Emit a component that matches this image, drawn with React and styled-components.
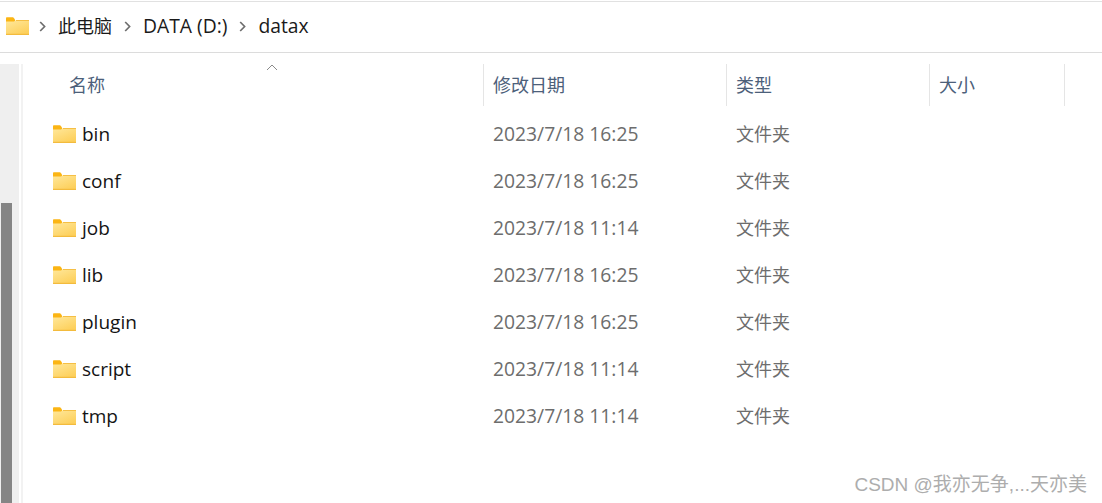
import React from "react";
import styled, { createGlobalStyle } from "styled-components";

const GlobalStyle = createGlobalStyle`
  html, body { margin: 0; padding: 0; background: #fff; }
  body { font-family: "Open Sans", "Noto Sans CJK SC", sans-serif; overflow: hidden; }
`;

const files = [
  { name: "bin", date: "2023/7/18 16:25" },
  { name: "conf", date: "2023/7/18 16:25" },
  { name: "job", date: "2023/7/18 11:14" },
  { name: "lib", date: "2023/7/18 16:25" },
  { name: "plugin", date: "2023/7/18 16:25" },
  { name: "script", date: "2023/7/18 11:14" },
  { name: "tmp", date: "2023/7/18 11:14" },
];

const columns = "461px 243px 203px 135px";

function FolderIcon({ id }) {
  return (
    <svg width="23" height="18" viewBox="0 0 23 18">
      <defs>
        <linearGradient id={id} x1="0" y1="0" x2="0.6" y2="1">
          <stop offset="0" stopColor="#ffe89c" />
          <stop offset="1" stopColor="#fdd05c" />
        </linearGradient>
      </defs>
      <path d="M0 1.2C0 .6.5.2 1 .2h5.4c.4 0 .7.1 1 .4L9 2.4v3H0z" fill="#fbb514" />
      <path d="M0 4.6h8L10 3h12.2c.5 0 .8.3.8.8v13.4c0 .5-.3.8-.8.8H.8c-.5 0-.8-.3-.8-.8z" fill={`url(#${id})`} />
      <rect x="0" y="16.8" width="23" height="1.2" fill="#f3bb3d" />
      <rect x="10" y="3" width="13" height="1" fill="#f5bf45" />
    </svg>
  );
}

function Chevron() {
  return (
    <ChevronBox>
      <svg width="7" height="11" viewBox="0 0 7 11">
        <path d="M1.2 1 5.6 5.5 1.2 10" fill="none" stroke="#6e6e6e" strokeWidth="1.7" />
      </svg>
    </ChevronBox>
  );
}

export default function App() {
  return (
    <Page>
      <GlobalStyle />
      <AddressBar>
        <FolderIcon id="addr" />
        <Chevron />
        <Crumb $cjk>此电脑</Crumb>
        <Chevron />
        <Crumb>DATA (D:)</Crumb>
        <Chevron />
        <Crumb>datax</Crumb>
      </AddressBar>
      <Body>
        <ScrollTrack>
          <ScrollThumb />
        </ScrollTrack>
        <Listing>
          <HeaderRow>
            <HeaderCell $first>
              名称
              <SortCaret width="12" height="7" viewBox="0 0 12 7">
                <path d="M1 6 6 1l5 5" fill="none" stroke="#8a8a8a" strokeWidth="1" />
              </SortCaret>
            </HeaderCell>
            <HeaderCell>修改日期</HeaderCell>
            <HeaderCell>类型</HeaderCell>
            <HeaderCell>大小</HeaderCell>
          </HeaderRow>
          {files.map((file) => (
            <FileRow key={file.name}>
              <NameCell>
                <FolderIcon id={`f-${file.name}`} />
                <FileName>{file.name}</FileName>
              </NameCell>
              <DateCell>{file.date}</DateCell>
              <TypeCell>文件夹</TypeCell>
              <span />
            </FileRow>
          ))}
        </Listing>
      </Body>
      <Watermark>CSDN @我亦无争,...天亦美</Watermark>
    </Page>
  );
}

const Page = styled.div`
  position: relative;
  width: 1102px;
  height: 503px;
  overflow: hidden;
  background: #fff;
`;

const AddressBar = styled.div`
  box-sizing: border-box;
  height: 52px;
  margin-top: 1px;
  border-top: 1px solid #e1e1e1;
  border-bottom: 1px solid #dcdcdc;
  padding: 0 0 2px 6px;
  display: flex;
  align-items: center;
  color: #1a1a1a;
`;

const ChevronBox = styled.span`
  display: flex;
  width: 30px;
  padding-left: 10px;
  box-sizing: border-box;
  align-items: center;
`;

const Crumb = styled.span`
  font-size: ${(p) => (p.$cjk ? "18px" : "19.3px")};
  line-height: 24px;
  margin-left: -1px;
  margin-right: 2px;
`;

const Body = styled.div`
  display: flex;
  height: 450px;
`;

const ScrollTrack = styled.div`
  box-sizing: border-box;
  width: 23px;
  margin-top: 11px;
  padding-top: 139px;
  background: linear-gradient(to right, #efefef 0 19px, #fff 19px 21px, #f2f2f2 21px 23px);
`;

const ScrollThumb = styled.div`
  width: 11px;
  height: 300px;
  margin-left: 1px;
  background: #858585;
`;

const Listing = styled.div`
  flex: 1;
  min-width: 0;
  padding-top: 11px;
`;

const HeaderRow = styled.div`
  display: grid;
  grid-template-columns: ${columns};
  height: 40px;
  margin-bottom: 6px;
`;

const HeaderCell = styled.div`
  position: relative;
  box-sizing: border-box;
  padding-left: ${(p) => (p.$first ? "46px" : "9px")};
  border-right: 1px solid #e5e5e5;
  font-size: 18px;
  line-height: 42px;
  color: #4c607a;
`;

const SortCaret = styled.svg`
  position: absolute;
  left: 243px;
  top: 0;
`;

const FileRow = styled.div`
  display: grid;
  grid-template-columns: ${columns};
  height: 47px;
  align-items: center;
`;

const NameCell = styled.div`
  display: flex;
  align-items: center;
  gap: 6px;
  padding-left: 30px;
`;

const FileName = styled.span`
  font-size: 19px;
  color: #141414;
`;

const DateCell = styled.div`
  padding-left: 9px;
  font-size: 19.3px;
  color: #6d6d6d;
`;

const TypeCell = styled.div`
  padding: 0 0 2px 9px;
  font-size: 18px;
  color: #6d6d6d;
`;

const Watermark = styled.div`
  position: absolute;
  right: 15px;
  bottom: 7px;
  font-family: "Liberation Sans", "Noto Sans CJK SC", sans-serif;
  font-size: 19px;
  color: #adadad;
`;
